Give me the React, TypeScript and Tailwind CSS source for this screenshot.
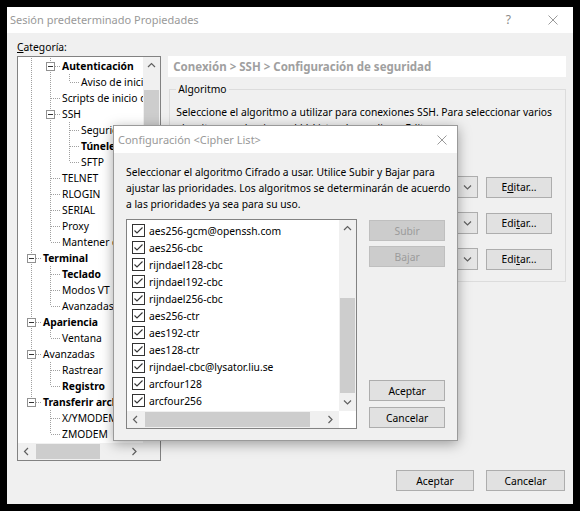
import React from "react";

type Dir = "up" | "down" | "left" | "right";

function Chevron({ dir }: { dir: Dir }) {
  const vertical = dir === "up" || dir === "down";
  const d = {
    up: "M1 5 L4.5 1.5 L8 5",
    down: "M1 1.5 L4.5 5 L8 1.5",
    left: "M5 1 L1.5 4.5 L5 8",
    right: "M1.5 1 L5 4.5 L1.5 8",
  }[dir];
  return (
    <svg width={vertical ? 9 : 7} height={vertical ? 7 : 9} viewBox={vertical ? "0 0 9 7" : "0 0 7 9"}>
      <path d={d} fill="none" stroke="#606060" strokeWidth="1.2" />
    </svg>
  );
}

function CloseX() {
  return (
    <svg width="10" height="10" viewBox="0 0 10 10">
      <path d="M0.5 0.5 L9.5 9.5 M9.5 0.5 L0.5 9.5" fill="none" stroke="#9a9a9a" strokeWidth="1" />
    </svg>
  );
}

function Btn({ children, className = "", disabled = false }: { children: React.ReactNode; className?: string; disabled?: boolean }) {
  return (
    <div
      className={`flex items-center justify-center border ${
        disabled ? "bg-[#cccccc] border-[#bfbfbf] text-[#9b9b9b]" : "bg-[#e1e1e1] border-[#adadad] text-black"
      } ${className}`}
    >
      {children}
    </div>
  );
}

type TreeItem = { t: string; g: boolean[]; last?: boolean; exp?: boolean; b?: boolean };

const treeItems: TreeItem[] = [
  { t: "Autenticación", g: [true], exp: true, b: true },
  { t: "Aviso de inicio de sesión", g: [true, true], last: true },
  { t: "Scripts de inicio de sesión", g: [true] },
  { t: "SSH", g: [true], exp: true },
  { t: "Seguridad", g: [true, true] },
  { t: "Túneles", g: [true, true], b: true },
  { t: "SFTP", g: [true, true], last: true },
  { t: "TELNET", g: [true] },
  { t: "RLOGIN", g: [true] },
  { t: "SERIAL", g: [true] },
  { t: "Proxy", g: [true] },
  { t: "Mantener conexión activa", g: [true], last: true },
  { t: "Terminal", g: [], exp: true, b: true },
  { t: "Teclado", g: [true], b: true },
  { t: "Modos VT", g: [true] },
  { t: "Avanzadas", g: [true], last: true },
  { t: "Apariencia", g: [], exp: true, b: true },
  { t: "Ventana", g: [true], last: true },
  { t: "Avanzadas", g: [], exp: true },
  { t: "Rastrear", g: [true] },
  { t: "Registro", g: [true], b: true, last: true },
  { t: "Transferir archivo", g: [], exp: true, b: true, last: true },
  { t: "X/YMODEM", g: [false] },
  { t: "ZMODEM", g: [false], last: true },
];

const dot = { stroke: "#a0a0a0", strokeDasharray: "1 1", fill: "none" };

function Guide({ on }: { on: boolean }) {
  return (
    <svg width="19" height="16" className="shrink-0">
      {on && <path d="M9.5 0 V16" {...dot} />}
    </svg>
  );
}

function Own({ last, exp }: { last?: boolean; exp?: boolean }) {
  return (
    <svg width="19" height="16" className="shrink-0">
      <path d={last ? "M9.5 0 V8" : "M9.5 0 V16"} {...dot} />
      <path d="M10 8.5 H19" {...dot} />
      {exp && (
        <>
          <rect x="5.5" y="4.5" width="8" height="8" fill="white" stroke="#919191" />
          <path d="M7 8.5 H12" stroke="#333333" />
        </>
      )}
    </svg>
  );
}

function Tree() {
  return (
    <div className="grid h-[405px] grid-cols-[1fr_17px] grid-rows-[1fr_17px] border border-[#828282] bg-white">
      <div className="overflow-hidden pl-[4px] pt-[1px]">
        {treeItems.map((r, i) => (
          <div key={i} className="flex h-[16px] items-center whitespace-nowrap">
            {r.g.map((on, j) => (
              <Guide key={j} on={on} />
            ))}
            <Own last={r.last} exp={r.exp} />
            <span className={`ml-[2px] ${r.b ? "font-bold" : ""}`}>{r.t}</span>
          </div>
        ))}
      </div>
      <div className="flex flex-col bg-[#f0f0f0]">
        <div className="flex h-[17px] items-center justify-center">
          <Chevron dir="up" />
        </div>
        <div className="mx-[1px] mt-[16px] h-[200px] bg-[#cdcdcd]" />
        <div className="mt-auto flex h-[17px] items-center justify-center">
          <Chevron dir="down" />
        </div>
      </div>
      <div className="flex items-center bg-[#f0f0f0]">
        <div className="flex w-[17px] justify-center">
          <Chevron dir="left" />
        </div>
        <div className="ml-[1px] h-[15px] w-[64px] bg-[#cdcdcd]" />
        <div className="ml-auto flex w-[17px] justify-center">
          <Chevron dir="right" />
        </div>
      </div>
      <div className="bg-[#f0f0f0]" />
    </div>
  );
}

function Check() {
  return (
    <svg width="13" height="13" viewBox="0 0 13 13" className="shrink-0">
      <rect x="0.5" y="0.5" width="12" height="12" fill="white" stroke="#333333" />
      <path d="M2.5 6.5 L5 9 L10.5 3.5" fill="none" stroke="#333333" strokeWidth="1.1" />
    </svg>
  );
}

const ciphers = [
  "aes256-gcm@openssh.com",
  "aes256-cbc",
  "rijndael128-cbc",
  "rijndael192-cbc",
  "rijndael256-cbc",
  "aes256-ctr",
  "aes192-ctr",
  "aes128-ctr",
  "rijndael-cbc@lysator.liu.se",
  "arcfour128",
  "arcfour256",
];

function CipherList() {
  return (
    <div className="grid h-[210px] w-[232px] grid-cols-[1fr_17px] grid-rows-[1fr_17px] border border-[#828282] bg-white">
      <div className="overflow-hidden pl-[5px] pt-[2px]">
        {ciphers.map((c) => (
          <div key={c} className="flex h-[17px] items-center whitespace-nowrap">
            <Check />
            <span className="ml-[4px]">{c}</span>
          </div>
        ))}
      </div>
      <div className="flex flex-col bg-[#f0f0f0]">
        <div className="flex h-[17px] items-center justify-center">
          <Chevron dir="up" />
        </div>
        <div className="mx-[1px] mt-[61px] h-[95px] bg-[#cdcdcd]" />
        <div className="mt-auto flex h-[17px] items-center justify-center">
          <Chevron dir="down" />
        </div>
      </div>
      <div className="flex items-center bg-[#f0f0f0]">
        <div className="flex w-[17px] justify-center">
          <Chevron dir="left" />
        </div>
        <div className="ml-[1px] h-[15px] w-[165px] bg-[#cdcdcd]" />
        <div className="ml-auto flex w-[17px] justify-center">
          <Chevron dir="right" />
        </div>
      </div>
      <div className="bg-white" />
    </div>
  );
}

function CipherDialog() {
  return (
    <div className="absolute left-[106px] top-[118px] flex w-[345px] flex-col border border-[#9a9a9a] bg-[#f0f0f0] shadow-[0_3px_12px_rgba(0,0,0,0.35)]">
      <div className="flex h-[27px] items-center bg-white pl-[4px]">
        <span className="text-[11px] text-[#999999]">Configuración &lt;Cipher List&gt;</span>
        <span className="ml-auto mr-[10px] flex">
          <CloseX />
        </span>
      </div>
      <div className="flex flex-col px-[12px] pb-[11px] pt-[11px]">
        <p className="whitespace-nowrap">
          Seleccionar el algoritmo Cifrado a usar. Utilice Subir y Bajar para
          <br />
          ajustar las prioridades. Los algoritmos se determinarán de acuerdo
          <br />
          a las prioridades ya sea para su uso.
        </p>
        <div className="mt-[7px] flex">
          <CipherList />
          <div className="ml-[12px] flex w-[76px] flex-col py-[1px]">
            <Btn disabled className="h-[21px]">Subir</Btn>
            <Btn disabled className="mt-[5px] h-[21px]">Bajar</Btn>
            <Btn className="mt-auto h-[21px]">Aceptar</Btn>
            <Btn className="mt-[6px] h-[21px]">Cancelar</Btn>
          </div>
        </div>
      </div>
    </div>
  );
}

function AlgoRow({ first, label }: { first?: boolean; label: React.ReactNode }) {
  return (
    <div className={`flex h-[22px] items-center justify-end ${first ? "mt-[40px]" : "mt-[14px]"}`}>
      <div className="flex h-[22px] w-[180px] items-center justify-end border border-[#adadad] bg-[#e5e5e5] pr-[5px]">
        <Chevron dir="down" />
      </div>
      <Btn className="ml-[8px] h-[21px] w-[66px]">{label}</Btn>
    </div>
  );
}

export default function App() {
  return (
    <div className="h-[511px] w-[580px] bg-black p-[7px] font-['Noto_Sans',sans-serif] text-[10.3px] leading-[16px] text-black">
      <div className="relative flex h-full w-full flex-col bg-[#f0f0f0]">
        <div className="flex h-[26px] items-center bg-white pl-[3px]">
          <span className="text-[11px] text-[#999999]">Sesión predeterminado Propiedades</span>
          <span className="ml-auto text-[12px] text-[#8a8a8a]">?</span>
          <span className="ml-[37px] mr-[15px] flex">
            <CloseX />
          </span>
        </div>

        <div className="flex pl-[10px] pr-[7px] pt-[6px]">
          <div className="flex w-[146px] flex-col">
            <div className="h-[17px]">
              <span className="underline">C</span>ategoría:
            </div>
            <Tree />
          </div>

          <div className="ml-[7px] flex flex-1 flex-col pt-[17px]">
            <div className="flex h-[21px] items-center bg-white pl-[5px] text-[11.5px] font-bold text-[#a0a0a0]">
              Conexión &gt; SSH &gt; Configuración de seguridad
            </div>
            <fieldset className="ml-[1px] mt-[4px] border border-[#dcdcdc] pb-[11px] pl-[6px] pr-[13px]">
              <legend className="px-[2px] leading-[16px]">Algoritmo</legend>
              <p className="mt-[7px] whitespace-nowrap">
                Seleccione el algoritmo a utilizar para conexiones SSH. Para seleccionar varios
                <br />
                algoritmos, seleccione &lt;*** List&gt; y haga clic en Editar.
              </p>
              <AlgoRow first label={<span>E<span className="underline">d</span>itar...</span>} />
              <AlgoRow label={<span>Edi<span className="underline">t</span>ar...</span>} />
              <AlgoRow label={<span>Edi<span className="underline">t</span>ar...</span>} />
            </fieldset>
          </div>
        </div>

        <div className="mt-auto flex justify-end gap-[12px] pb-[13px] pr-[8px]">
          <Btn className="h-[21px] w-[78px]">Aceptar</Btn>
          <Btn className="h-[21px] w-[79px]">Cancelar</Btn>
        </div>

        <CipherDialog />
      </div>
    </div>
  );
}
